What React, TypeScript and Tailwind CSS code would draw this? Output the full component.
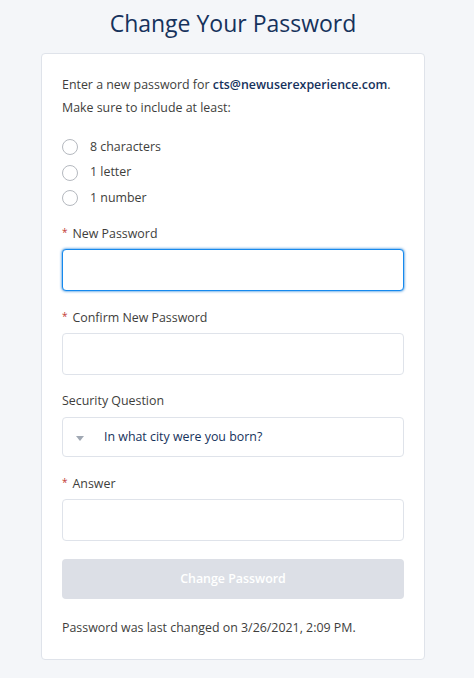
import { useState } from "react";

const requirements = ["8 characters", "1 letter", "1 number"];

function Label({ text, required }: { text: string; required?: boolean }) {
  return (
    <label className="block h-5 text-[12.4px] leading-5 text-[#3e3e3c]">
      {required && <span className="mr-[5px] align-[2px] text-[10px] text-[#c23934]">*</span>}
      {text}
    </label>
  );
}

export default function App() {
  const [pw, setPw] = useState("");
  const [confirm, setConfirm] = useState("");
  const [answer, setAnswer] = useState("");

  return (
    <div
      className="min-h-[678px] w-full bg-[#f4f6f9] text-[#3e3e3c]"
      style={{ fontFamily: "'Open Sans', 'Liberation Sans', sans-serif" }}
    >
      <div className="ml-[41px] w-[384px] pb-[18px]">
        <h1 className="pt-[7px] text-center text-[23px] leading-[32px] text-[#16325c]">
          Change Your Password
        </h1>
        <div className="mt-[14px] rounded-[4px] border border-[#dfe3ea] bg-white px-[20px] pt-[21px] pb-[21px]">
          <p className="whitespace-nowrap text-[12.4px] leading-5">
            Enter a new password for{" "}
            <span className="font-semibold text-[#16325c]">cts@newuserexperience.com</span>.
          </p>
          <p className="mt-[3px] text-[12.4px] leading-5">Make sure to include at least:</p>

          <ul className="mt-[19px] flex flex-col gap-[5.5px]">
            {requirements.map((r) => (
              <li key={r} className="flex h-5 items-center text-[12.4px]">
                <span className="mr-[12px] size-4 rounded-full border border-[#b5b9bf]" />
                {r}
              </li>
            ))}
          </ul>

          <div className="mt-[14px]">
            <Label text="New Password" required />
            <input
              type="password"
              value={pw}
              onChange={(e) => setPw(e.target.value)}
              className="mt-[7px] block h-[42px] w-full rounded-[4px] border border-[#1589ee] bg-white px-3 shadow-[0_0_3px_#0070d2] outline-none"
            />
          </div>

          <div className="mt-[15px]">
            <Label text="Confirm New Password" required />
            <input
              type="password"
              value={confirm}
              onChange={(e) => setConfirm(e.target.value)}
              className="mt-[7px] block h-[42px] w-full rounded-[4px] border border-[#dfe3ea] bg-white px-3 outline-none"
            />
          </div>

          <div className="mt-[16px]">
            <Label text="Security Question" />
            <div className="mt-[6px] flex h-[40px] items-center rounded-[4px] border border-[#dfe3ea] bg-white pl-[13px] text-[12.4px] text-[#16325c]">
              <svg width="8" height="5" viewBox="0 0 8 5" className="mt-[3px] mr-[20px]">
                <path d="M0 0h8L4 5z" fill="#a0a8b3" />
              </svg>
              In what city were you born?
            </div>
          </div>

          <div className="mt-[15px]">
            <Label text="Answer" required />
            <input
              type="text"
              value={answer}
              onChange={(e) => setAnswer(e.target.value)}
              className="mt-[7px] block h-[42px] w-full rounded-[4px] border border-[#dfe3ea] bg-white px-3 outline-none"
            />
          </div>

          <button
            type="button"
            disabled
            className="mt-[18px] block h-[40px] w-full rounded-[4px] bg-[#dcdfe6] text-[12.4px] font-semibold text-white"
          >
            Change Password
          </button>

          <p className="mt-[19px] text-[12.4px] leading-5">
            Password was last changed on 3/26/2021, 2:09 PM.
          </p>
        </div>
      </div>
    </div>
  );
}
